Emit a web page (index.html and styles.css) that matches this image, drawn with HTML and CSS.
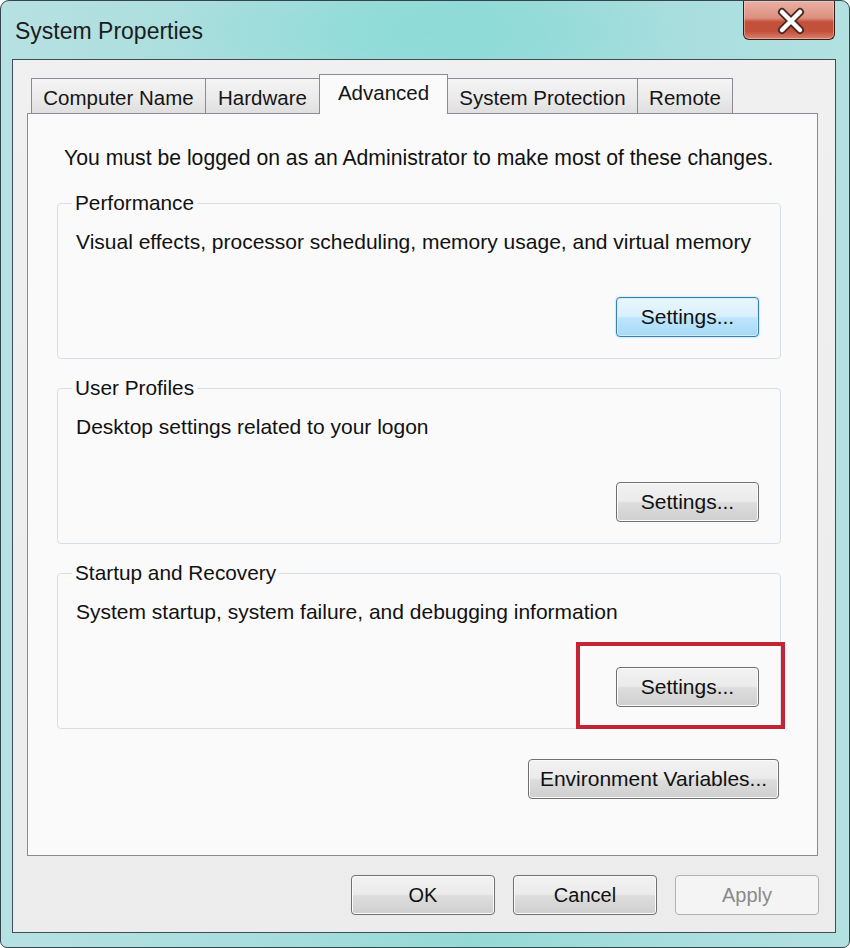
FILE: index.html
```html
<!DOCTYPE html>
<html lang="en">
    <head>
        <meta charset="UTF-8">
        <meta name="viewport" content="width=device-width, initial-scale=1.0">
        <title>System Properties</title>
        <link rel="stylesheet" href="styles.css">
    </head>
<body>
    <div class="window">
        <div class="titlebar">
            <span class="title">System Properties</span>
            <button class="close" title="Close">
                <svg width="92" height="39" viewBox="0 0 92 39">
                    <path d="M38 11 L56 29 M56 11 L38 29" stroke="#4a2620" stroke-width="8" stroke-linecap="round" fill="none"/>
                    <path d="M38 11 L56 29 M56 11 L38 29" stroke="#ffffff" stroke-width="4.5" stroke-linecap="round" fill="none"/>
                </svg>
            </button>
        </div>

        <div class="client">
            <div class="tabs">
                <div class="tab tab-cn">Computer Name</div>
                <div class="tab tab-hw">Hardware</div>
                <div class="tab tab-adv active">Advanced</div>
                <div class="tab tab-sp">System Protection</div>
                <div class="tab tab-rm">Remote</div>
            </div>

            <div class="panel">
                <p class="intro">You must be logged on as an Administrator to make most of these changes.</p>

                <fieldset class="group">
                    <legend>Performance</legend>
                    <p class="desc">Visual effects, processor scheduling, memory usage, and virtual memory</p>
                    <div class="group-actions">
                        <button class="btn btn-default">Settings...</button>
                    </div>
                </fieldset>

                <fieldset class="group">
                    <legend>User Profiles</legend>
                    <p class="desc">Desktop settings related to your logon</p>
                    <div class="group-actions">
                        <button class="btn">Settings...</button>
                    </div>
                </fieldset>

                <fieldset class="group">
                    <legend>Startup and Recovery</legend>
                    <p class="desc">System startup, system failure, and debugging information</p>
                    <div class="group-actions">
                        <span class="highlight">
                            <button class="btn">Settings...</button>
                        </span>
                    </div>
                </fieldset>

                <div class="env-row">
                    <button class="btn btn-env">Environment Variables...</button>
                </div>
            </div>

            <div class="dialog-buttons">
                <button class="btn btn-dlg">OK</button>
                <button class="btn btn-dlg">Cancel</button>
                <button class="btn btn-dlg" disabled>Apply</button>
            </div>
        </div>
    </div>
</body>
</html>
```

FILE: styles.css
```css
* {
    box-sizing: border-box;
}

body {
    margin: 0;
    background-color: #ffffff;
    font-family: 'Liberation Sans', Arial, sans-serif;
    color: #111111;
}

.window {
    width: 850px;
    height: 948px;
    display: flex;
    flex-direction: column;
    padding: 0 13px 14px 11px;
    border: 1px solid #34464b;
    border-radius: 9px 9px 7px 7px;
    background:
        radial-gradient(ellipse 260px 60px at 420px 30px, rgba(140, 220, 216, 0.9), rgba(140, 220, 216, 0) 100%),
        linear-gradient(90deg, #b7e1e2 0%, #a5dddc 35%, #95d9d6 55%, #a9dede 80%, #b3e1e1 100%);
}

.titlebar {
    height: 58px;
    display: flex;
    justify-content: space-between;
    align-items: flex-start;
}

.title {
    margin-top: 17px;
    padding-left: 3px;
    font-size: 23px;
    color: #1c1c1c;
}

.close {
    width: 92px;
    height: 39px;
    margin-right: 1px;
    padding: 0;
    border: 1px solid #3a1b15;
    border-top: none;
    border-radius: 0 0 6px 6px;
    background: linear-gradient(to bottom, #e9b0a4 0%, #dc8f7f 45%, #c4503a 55%, #c3513c 80%, #d98270 100%);
    box-shadow: inset 0 0 0 1px rgba(255, 220, 210, 0.45);
    cursor: pointer;
}

.close svg {
    display: block;
}

.client {
    flex: 1;
    display: flex;
    flex-direction: column;
    padding: 14px 17px 0 14px;
    border: 1px solid #3e4d55;
    background: linear-gradient(to bottom, #f0f0f0, #ececec);
}

.tabs {
    height: 39px;
    display: flex;
    align-items: flex-end;
    padding-left: 4px;
}

.tab {
    height: 35px;
    margin-right: -1px;
    padding-top: 7px;
    border: 1px solid #898c95;
    border-bottom: none;
    background: linear-gradient(to bottom, #f4f4f4 0%, #ececec 50%, #dfdfdf 100%);
    font-size: 20.5px;
    text-align: center;
    color: #151515;
}

.tab-cn { width: 175px; }
.tab-hw { width: 115px; }
.tab-adv { width: 129px; }
.tab-sp { width: 191px; }
.tab-rm { width: 96px; }

.tab.active {
    position: relative;
    z-index: 1;
    height: 40px;
    margin-bottom: -1px;
    padding-top: 6px;
    background: #fafafa;
}

.panel {
    height: 743px;
    display: flex;
    flex-direction: column;
    padding: 32px 36px 0 29px;
    border: 1px solid #898c95;
    background: #fafafa;
}

.intro {
    margin: 0 0 21px 7px;
    font-size: 21.2px;
    line-height: 24px;
}

.group {
    margin: 0 0 17px 0;
    padding: 15px 21px 21px 18px;
    border: 1px solid #d5dfe5;
    border-radius: 4px;
    min-width: 0;
}

.group legend {
    margin-left: -4px;
    padding: 0 3px;
    font-size: 20.8px;
    line-height: 24px;
}

.desc {
    margin: 0;
    font-size: 21px;
    line-height: 24px;
}

.group-actions {
    display: flex;
    justify-content: flex-end;
    margin-top: 43px;
}

.btn {
    height: 40px;
    padding: 0;
    border: 1px solid #707070;
    border-radius: 4px;
    background: linear-gradient(to bottom, #f2f2f2 0%, #ebebeb 48%, #dddddd 52%, #cfcfcf 100%);
    box-shadow: inset 0 0 0 1px #fbfbfb;
    font-family: 'Liberation Sans', Arial, sans-serif;
    font-size: 20px;
    color: #111111;
    cursor: pointer;
}

.group .btn {
    width: 143px;
    font-size: 21px;
}

.btn-default {
    border-color: #3c7fb1;
    background: linear-gradient(to bottom, #eaf6fd 0%, #d9f0fc 48%, #bee6fd 52%, #a7d9f5 100%);
    box-shadow: inset 0 0 0 1px #cdeefb, 0 0 2px #7ecbe8;
}

.highlight {
    position: relative;
    display: inline-block;
}

.highlight::after {
    content: "";
    position: absolute;
    top: -25px;
    right: -26px;
    bottom: -22px;
    left: -40px;
    border: 4px solid #c42434;
    pointer-events: none;
}

.env-row {
    display: flex;
    justify-content: flex-end;
    margin-top: 13px;
    padding-right: 2px;
}

.btn-env {
    width: 251px;
    font-size: 21px;
}

.dialog-buttons {
    display: flex;
    justify-content: flex-end;
    gap: 18px;
    margin-top: 19px;
    margin-right: -1px;
}

.btn-dlg {
    width: 144px;
}

.btn-dlg:disabled {
    border-color: #adb2b5;
    background: #f4f4f4;
    box-shadow: none;
    color: #8a8a8a;
    cursor: default;
}
```
